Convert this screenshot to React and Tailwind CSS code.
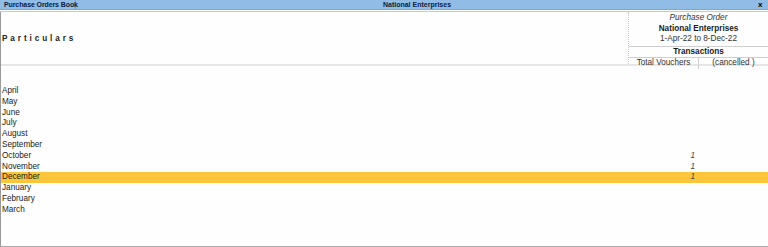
import React from 'react';

const MONTHS = [
  { name: 'April' },
  { name: 'May' },
  { name: 'June' },
  { name: 'July' },
  { name: 'August' },
  { name: 'September' },
  { name: 'October', count: '1' },
  { name: 'November', count: '1' },
  { name: 'December', count: '1', active: true },
  { name: 'January' },
  { name: 'February' },
  { name: 'March' },
];

export default function App() {
  return (
    <div
      className="w-[768px] h-[247px] bg-[#fdfefd] text-[#1b1b1b] overflow-hidden flex flex-col"
      style={{ fontFamily: '"Liberation Sans", Arial, sans-serif' }}
    >
      {/* title bar */}
      <div className="h-[10px] bg-[#90bce6] flex items-center text-[7px] font-bold text-[#0b1d44] leading-none border-b border-[#7aa8d6] whitespace-nowrap">
        <div className="w-[76px] pl-[4px] border-r border-[#6f9ccb] h-full flex items-center tracking-[-0.1px]">Purchase Orders Book</div>
        <div className="flex-1 text-center">National Enterprises</div>
        <div className="w-[10px] text-[8px] text-black">x</div>
      </div>
      <div className="h-[2px] bg-white border-b border-[#c8c8c8]"></div>

      {/* body */}
      <div className="flex-1 flex flex-col border-l border-[#9a9a9a] border-b border-b-[#a8a8a8] text-[8.2px] leading-[10.6px]">
        {/* header */}
        <div className="flex border-b-2 border-[#e6e6e6] h-[54px]">
          <div className="flex-1 flex items-center pl-[1px] pt-[2px] font-bold tracking-[2.9px] text-[#222]">
            Particulars
          </div>
          <div className="w-[140px] border-l border-dotted border-[#c9c9c9] flex flex-col text-center">
            <div className="pt-[1px] italic text-[#333]">Purchase Order</div>
            <div className="font-bold">National Enterprises</div>
            <div className="text-[#333] pb-[1px]">1-Apr-22 to 8-Dec-22</div>
            <div className="border-t border-[#cfcfcf] font-bold">Transactions</div>
            <div className="border-t border-[#cfcfcf] flex">
              <div className="w-[70px] border-r border-[#cfcfcf] text-[#333]">Total Vouchers</div>
              <div className="flex-1 text-[#333]">(cancelled )</div>
            </div>
          </div>
        </div>

        {/* rows */}
        <div className="pt-[20px] flex flex-col">
          {MONTHS.map((m) => (
            <div
              key={m.name}
              className={`flex h-[10.8px] items-center ${m.active ? 'bg-[#fcc53a]' : ''}`}
            >
              <div className="flex-1 pl-[1px]">{m.name}</div>
              <div className="w-[140px] flex">
                <div className="w-[70px] text-right pr-[3px] italic text-[#444]">{m.count}</div>
                <div className="flex-1"></div>
              </div>
            </div>
          ))}
        </div>
      </div>
    </div>
  );
}
